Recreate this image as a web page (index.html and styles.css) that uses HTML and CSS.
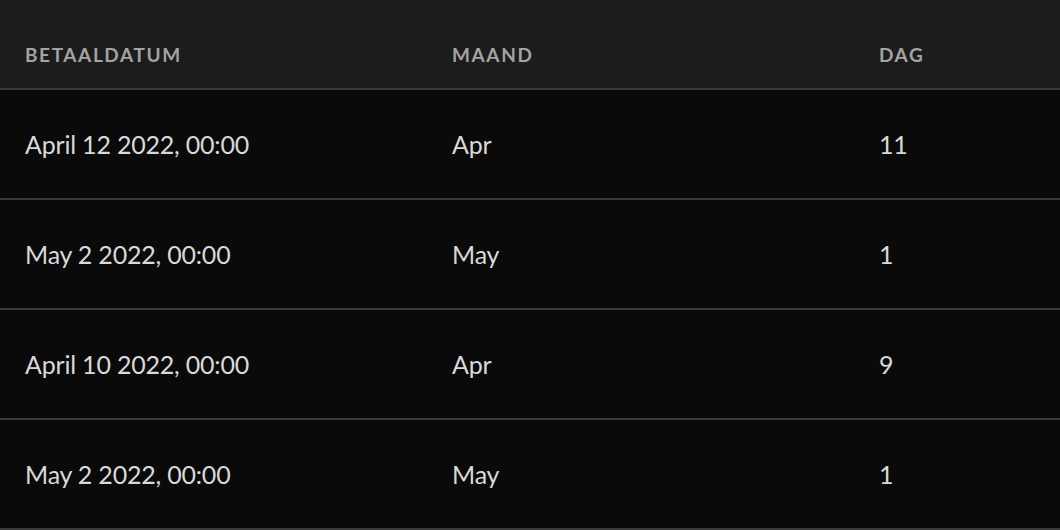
FILE: index.html
```html
<!DOCTYPE html>
<html>
<head>
<meta charset="utf-8">
<link rel="stylesheet" href="styles.css">
</head>
<body>
<div class="table">
  <div class="row head">
    <div class="cell">Betaaldatum</div>
    <div class="cell">Maand</div>
    <div class="cell">Dag</div>
  </div>
  <div class="row">
    <div class="cell">April 12 2022, 00:00</div>
    <div class="cell">Apr</div>
    <div class="cell">11</div>
  </div>
  <div class="row">
    <div class="cell">May 2 2022, 00:00</div>
    <div class="cell">May</div>
    <div class="cell">1</div>
  </div>
  <div class="row">
    <div class="cell">April 10 2022, 00:00</div>
    <div class="cell">Apr</div>
    <div class="cell">9</div>
  </div>
  <div class="row">
    <div class="cell">May 2 2022, 00:00</div>
    <div class="cell">May</div>
    <div class="cell">1</div>
  </div>
</div>
</body>
</html>
```
FILE: styles.css
```css
html, body {
  margin: 0;
  padding: 0;
  background: #0a0a0a;
}
body {
  font-family: "Lato", "Liberation Sans", sans-serif;
  width: 1060px;
  height: 530px;
  overflow: hidden;
}
.table {
  display: flex;
  flex-direction: column;
}
.row {
  display: grid;
  grid-template-columns: 427px 427px 1fr;
  padding-left: 25px;
  height: 108px;
  align-items: center;
  border-bottom: 2px solid #3a3a3a;
  background: #0a0a0a;
  color: #d9d9d9;
  font-size: 25px;
  letter-spacing: -0.2px;
}
.row.head {
  box-sizing: border-box;
  height: 90px;
  padding-top: 20px;
  background: #1c1c1c;
  color: #a3a3a3;
  font-size: 19px;
  font-weight: 700;
  text-transform: uppercase;
  letter-spacing: 1.6px;
}
```
